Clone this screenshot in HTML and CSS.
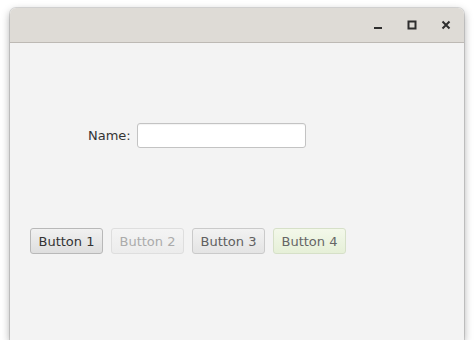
FILE: index.html
```html
<!DOCTYPE html>
<html lang="en">
<head>
  <meta charset="UTF-8" />
  <title>Form</title>
  <link rel="stylesheet" href="styles.css">
</head>
<body>
  <div class="window">
    <div class="titlebar">
      <span class="win-btn">
        <svg width="10" height="10" viewBox="0 0 10 10"><rect x="1" y="7" width="8" height="2" fill="#2e2e2e"/></svg>
      </span>
      <span class="win-btn">
        <svg width="10" height="10" viewBox="0 0 10 10"><rect x="1.5" y="1.5" width="7" height="7" fill="none" stroke="#2e2e2e" stroke-width="2"/></svg>
      </span>
      <span class="win-btn">
        <svg width="10" height="10" viewBox="0 0 10 10"><path d="M1.5 1.5 L8.5 8.5 M8.5 1.5 L1.5 8.5" stroke="#2e2e2e" stroke-width="2"/></svg>
      </span>
    </div>
    <div class="content">
      <div class="name-row">
        <label class="name-label">Name:</label>
        <input class="name-input" type="text">
      </div>
      <div class="buttons">
        <button class="btn">Button 1</button>
        <button class="btn btn-disabled">Button 2</button>
        <button class="btn btn-soft">Button 3</button>
        <button class="btn btn-green">Button 4</button>
      </div>
    </div>
  </div>
</body>
</html>
```

FILE: styles.css
```css
body {
  margin: 0;
  background-color: #fff;
  font-family: "DejaVu Sans", sans-serif;
  font-size: 13px;
  color: #333;
}

.window {
  margin: 8px 10px 0 10px;
  width: 454px;
  height: 332px;
  display: flex;
  flex-direction: column;
  border-radius: 6px 6px 0 0;
  box-shadow: 0 0 0 1px rgba(0, 0, 0, 0.12), 0 3px 8px rgba(0, 0, 0, 0.35);
  overflow: hidden;
}

.titlebar {
  height: 35px;
  background-color: #dedbd6;
  border-bottom: 1px solid #bdb9b4;
  display: flex;
  justify-content: flex-end;
  align-items: center;
  padding-right: 8px;
  gap: 14px;
  box-sizing: border-box;
}

.win-btn {
  width: 20px;
  height: 20px;
  display: flex;
  justify-content: center;
  align-items: center;
}

.content {
  flex: 1;
  background-color: #f3f3f3;
  padding: 80px 0 0 20px;
}

.name-row {
  display: flex;
  align-items: center;
  gap: 6px;
  margin-left: 58px;
}

.name-label {
  color: #333;
}

.name-input {
  width: 169px;
  height: 25px;
  box-sizing: border-box;
  border: 1px solid #c3c3c3;
  border-radius: 3px;
  background-color: #fff;
  box-shadow: inset 0 1px 1px rgba(0, 0, 0, 0.05);
}

.buttons {
  display: flex;
  gap: 8px;
  margin-top: 80px;
}

.btn {
  font-family: "DejaVu Sans", sans-serif;
  font-size: 13px;
  width: 73px;
  height: 26px;
  padding: 0;
  border: 1px solid #b8b8b8;
  border-radius: 3px;
  background: linear-gradient(#f1f1f1, #dedede);
  color: #333;
}

.btn-disabled {
  border-color: #dedede;
  background: linear-gradient(#f4f4f4, #ececec);
  color: #ababab;
}

.btn-soft {
  border-color: #cacaca;
  background: linear-gradient(#f2f2f2, #e4e4e4);
  color: #606060;
}

.btn-green {
  border-color: #d6e0c8;
  background: linear-gradient(#f3f8ea, #e6f0d8);
  color: #666;
}
```
